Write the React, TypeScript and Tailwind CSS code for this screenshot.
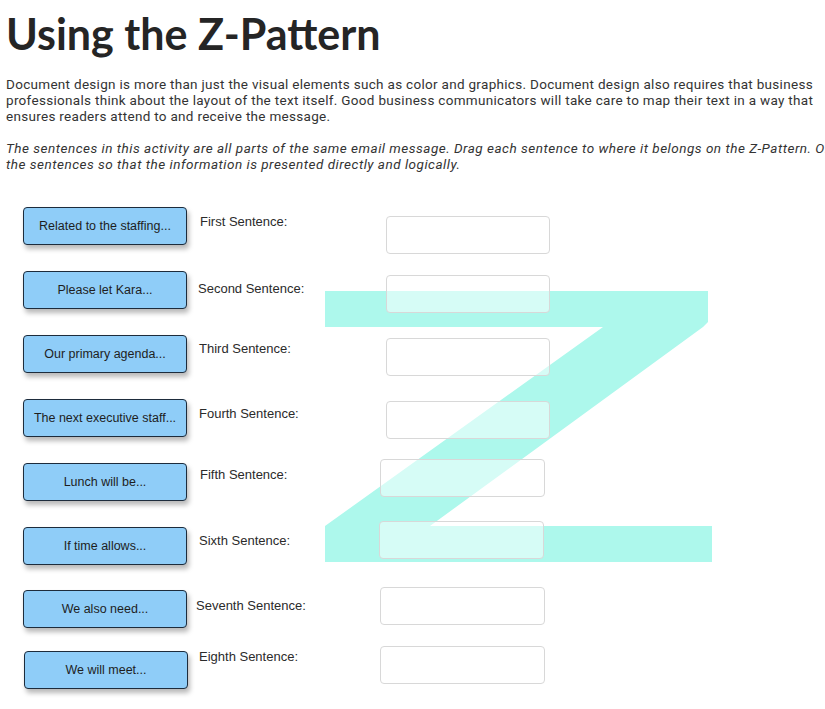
import React from 'react'

type Row = {
  text: string
  label: string
  h: string
  btn: string
  lab: string
  inp: string
}

// each row: button, label, drop box (margins copied from the activity layout)
const rows: Row[] = [
  { text: 'Related to the staffing...', label: 'First Sentence:', h: 'h-[64px]', btn: 'ml-[23px]', lab: 'ml-[13px] w-[186px] mt-[14px]', inp: 'mt-[15px] w-[164px]' },
  { text: 'Please let Kara...', label: 'Second Sentence:', h: 'h-[64px]', btn: 'ml-[23px]', lab: 'ml-[11px] w-[188px] mt-[17px]', inp: 'mt-[10px] w-[164px]' },
  { text: 'Our primary agenda...', label: 'Third Sentence:', h: 'h-[64px]', btn: 'ml-[23px]', lab: 'ml-[12px] w-[187px] mt-[13px]', inp: 'mt-[9px] w-[164px]' },
  { text: 'The next executive staff...', label: 'Fourth Sentence:', h: 'h-[64px]', btn: 'ml-[23px]', lab: 'ml-[12px] w-[187px] mt-[14px]', inp: 'mt-[8px] w-[164px]' },
  { text: 'Lunch will be...', label: 'Fifth Sentence:', h: 'h-[64px]', btn: 'ml-[23px]', lab: 'ml-[13px] w-[180px] mt-[11px]', inp: 'mt-[2px] w-[165px]' },
  { text: 'If time allows...', label: 'Sixth Sentence:', h: 'h-[63px]', btn: 'ml-[23px]', lab: 'ml-[12px] w-[180px] mt-[13px]', inp: 'mt-[0px] w-[165px]' },
  { text: 'We also need...', label: 'Seventh Sentence:', h: 'h-[61px]', btn: 'ml-[23px]', lab: 'ml-[9px] w-[184px] mt-[15px]', inp: 'mt-[3px] w-[165px]' },
  { text: 'We will meet...', label: 'Eighth Sentence:', h: 'h-[58px]', btn: 'ml-[24px]', lab: 'ml-[11px] w-[181px] mt-[5px]', inp: 'mt-[1px] w-[165px]' },
]

function ZShape() {
  return (
    <svg
      className="absolute left-[325px] top-[291px]"
      width="387"
      height="271"
      viewBox="0 0 387 271"
    >
      <polygon
        fill="#adf8ec"
        points="0,0 383,0 383,31 378,36 105,235 387,235 387,271 0,271 0,235 278,36 0,36"
      />
    </svg>
  )
}

export default function App() {
  return (
    <div className="relative w-[825px] h-[709px] overflow-hidden bg-white">
      <ZShape />
      <div className="pl-[6px]">
        <h1 className="pt-[12px] font-['Lato',sans-serif] text-[43px] leading-none font-bold text-[#252525]">
          Using the Z-Pattern
        </h1>
        <p className="mt-[21px] font-['Roboto',sans-serif] text-[13.5px] leading-[16px] tracking-[0.3px] text-[#333] whitespace-nowrap">
          <span className="block">
            Document design is more than just the visual elements such as color and graphics. Document design also requires that business
          </span>
          <span className="block">
            professionals think about the layout of the text itself. Good business communicators will take care to map their text in a way that
          </span>
          <span className="block">ensures readers attend to and receive the message.</span>
        </p>
        <p className="mt-[16px] font-['Roboto',sans-serif] text-[13.5px] leading-[16px] tracking-[0.5px] italic text-[#333] whitespace-nowrap">
          <span className="block">
            The sentences in this activity are all parts of the same email message. Drag each sentence to where it belongs on the Z-Pattern. Order
          </span>
          <span className="block">the sentences so that the information is presented directly and logically.</span>
        </p>
      </div>

      <div className="mt-[29px] font-['Liberation_Sans',Arial,sans-serif]">
        {rows.map((r) => (
          <div key={r.label} className={`relative flex items-start ${r.h}`}>
            <button
              className={`${r.btn} mt-[6px] w-[164px] h-[38px] shrink-0 rounded-[4px] border border-[#1d2c3c] bg-[#8fcdf8] text-[12.5px] text-[#1e1e1e] shadow-[2px_4px_5px_rgba(0,0,0,0.28)]`}
            >
              {r.text}
            </button>
            <div className={`${r.lab} shrink-0 text-[13px] leading-[14px] text-[#2b2b2b]`}>{r.label}</div>
            <div
              className={`${r.inp} h-[38px] shrink-0 rounded-[4px] border border-[#d8d8d8] bg-white/50`}
            />
          </div>
        ))}
      </div>
    </div>
  )
}
